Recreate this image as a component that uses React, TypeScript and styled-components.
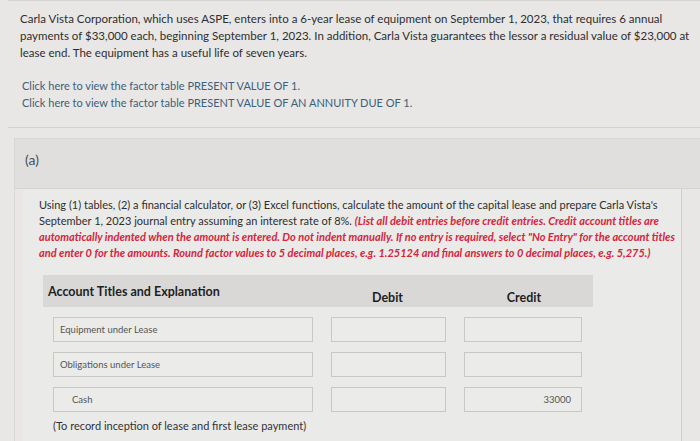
import styled, { createGlobalStyle } from 'styled-components';

const Global = createGlobalStyle`
  html, body {
    margin: 0;
    padding: 0;
    background: #e8e7e5;
    font-family: Lato, "Open Sans", sans-serif;
    color: #2e2e2e;
  }
`;

const Page = styled.div`
  width: 700px;
  height: 441px;
  overflow: hidden;
  padding-left: 8px;
  box-sizing: border-box;
`;

const IntroCard = styled.div`
  padding: 9px 0 16px 12px;
  border-bottom: 1px solid #d2d1cf;
  border-top: 1px solid #d6d5d3;
`;

const Para = styled.p`
  margin: 0;
  font-size: 11.5px;
  line-height: 17px;
  width: 672px;
`;

const Links = styled.div`
  margin-top: 16px;
  padding-left: 2px;
`;

const FactorLink = styled.a`
  display: block;
  font-size: 11px;
  line-height: 17px;
  color: #3d5f7a;
  text-decoration: none;
  cursor: pointer;
`;

const PartCard = styled.div`
  margin: 10px 0 0 6px;
  border-left: 1px solid #d8d7d5;
  border-top: 1px solid #d8d7d5;
`;

const PartHeader = styled.div`
  height: 50px;
  background: #e0dfdd;
  padding: 12px 0 0 10px;
  box-sizing: border-box;
  font-size: 14px;
  color: #4a4f5a;
  border-bottom: 1px solid #d4d3d1;
`;

const PartBody = styled.div`
  margin-left: 8px;
  margin-right: 18px;
  background: #eaeae8;
  border-right: 1px solid #cfcecc;
  padding: 8px 0 20px 16px;
`;

const Instructions = styled.p`
  margin: 0;
  font-size: 11px;
  line-height: 16px;
  width: 645px;
`;

const Red = styled.span`
  color: #d3253c;
  font-weight: 700;
  font-style: italic;
`;

const Table = styled.div`
  margin-top: 14px;
  width: 550px;
  margin-left: 4px;
`;

const Grid = styled.div`
  display: grid;
  grid-template-columns: 260px 115px 118px;
  column-gap: 18px;
  align-items: center;
`;

const HeadRow = styled(Grid)`
  background: #d9d8d6;
  height: 32px;
  padding-right: 11px;
  grid-template-columns: 278px 133px 140px;
  column-gap: 0;
`;

const HeadCell = styled.div<{ $center?: boolean }>`
  font-weight: 700;
  font-size: 12.5px;
  color: #1e1e1e;
  text-align: ${p => (p.$center ? 'center' : 'left')};
  padding: ${p => (p.$center ? '12px 0 0 0' : '0 0 0 5px')};
`;

const Row = styled(Grid)`
  padding-left: 10px;
  margin-top: 10px;
`;

const Field = styled.div<{ $indent?: boolean; $right?: boolean }>`
  height: 25px;
  border: 1px solid #c9c8c6;
  background: #ebebe9;
  box-sizing: border-box;
  font-size: 9.5px;
  color: #555;
  display: flex;
  align-items: center;
  justify-content: ${p => (p.$right ? 'flex-end' : 'flex-start')};
  padding: 0 ${p => (p.$right ? '10px' : '6px')} 0 ${p => (p.$indent ? '18px' : '6px')};
`;

const Note = styled.div`
  margin: 7px 0 0 10px;
  font-size: 11px;
  color: #333;
`;

const rows = [
  { title: 'Equipment under Lease', indent: false, debit: '', credit: '' },
  { title: 'Obligations under Lease', indent: false, debit: '', credit: '' },
  { title: 'Cash', indent: true, debit: '', credit: '33000' },
];

export default function App() {
  return (
    <Page>
      <Global />
      <IntroCard>
        <Para>
          Carla Vista Corporation, which uses ASPE, enters into a 6-year lease of equipment on September 1, 2023, that
          requires 6 annual payments of $33,000 each, beginning September 1, 2023. In addition, Carla Vista guarantees
          the lessor a residual value of $23,000 at lease end. The equipment has a useful life of seven years.
        </Para>
        <Links>
          <FactorLink>Click here to view the factor table PRESENT VALUE OF 1.</FactorLink>
          <FactorLink>Click here to view the factor table PRESENT VALUE OF AN ANNUITY DUE OF 1.</FactorLink>
        </Links>
      </IntroCard>
      <PartCard>
        <PartHeader>(a)</PartHeader>
        <PartBody>
          <Instructions>
            Using (1) tables, (2) a financial calculator, or (3) Excel functions, calculate the amount of the capital
            lease and prepare Carla Vista's September 1, 2023 journal entry assuming an interest rate of 8%.{' '}
            <Red>
              (List all debit entries before credit entries. Credit account titles are automatically indented when the
              amount is entered. Do not indent manually. If no entry is required, select "No Entry" for the account
              titles and enter 0 for the amounts. Round factor values to 5 decimal places, e.g. 1.25124 and final
              answers to 0 decimal places, e.g. 5,275.)
            </Red>
          </Instructions>
          <Table>
            <HeadRow>
              <HeadCell>Account Titles and Explanation</HeadCell>
              <HeadCell $center>Debit</HeadCell>
              <HeadCell $center>Credit</HeadCell>
            </HeadRow>
            {rows.map(r => (
              <Row key={r.title}>
                <Field $indent={r.indent}>{r.title}</Field>
                <Field $right>{r.debit}</Field>
                <Field $right>{r.credit}</Field>
              </Row>
            ))}
            <Note>(To record inception of lease and first lease payment)</Note>
          </Table>
        </PartBody>
      </PartCard>
    </Page>
  );
}
